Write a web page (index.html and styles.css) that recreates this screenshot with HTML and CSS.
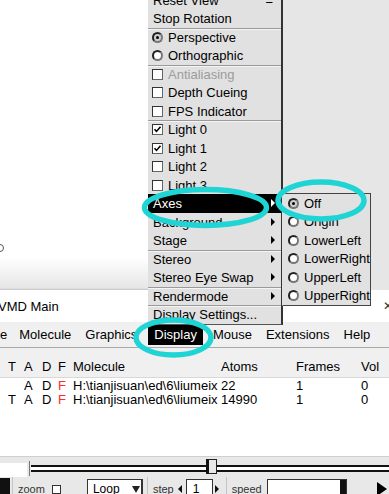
FILE: index.html
```html
<!DOCTYPE html>
<html lang="en">
<head>
  <meta charset="UTF-8">
  <title>VMD Main - Display menu</title>
  <link rel="stylesheet" href="styles.css">
</head>
<body>
  <div class="screen">
    <!-- behind the menu: GL window and desktop -->
    <div class="top">
      <div class="canvas"><span class="dot"></span></div>
      <div class="desk"></div>
    </div>

    <!-- VMD Main window -->
    <div class="vmd">
      <div class="titlebar">
        <span class="title">VMD Main</span>
        <span class="close">&#x2715;</span>
      </div>
      <div class="menubar">
        <span class="mb-item cut">e</span>
        <span class="mb-item">Molecule</span>
        <span class="mb-item">Graphics</span>
        <span class="mb-item open">Display</span>
        <span class="mb-item">Mouse</span>
        <span class="mb-item">Extensions</span>
        <span class="mb-item">Help</span>
      </div>
      <div class="list">
        <div class="row head">
          <span>T</span><span>A</span><span>D</span><span>F</span>
          <span>Molecule</span><span>Atoms</span><span>Frames</span><span>Vol</span>
        </div>
        <div class="row">
          <span></span><span>A</span><span>D</span><span class="red">F</span>
          <span>H:\tianjisuan\ed\6\liumeix</span><span>22</span><span>1</span><span>0</span>
        </div>
        <div class="row">
          <span>T</span><span>A</span><span>D</span><span class="red">F</span>
          <span>H:\tianjisuan\ed\6\liumeix</span><span>14990</span><span>1</span><span>0</span>
        </div>
      </div>
      <div class="slider">
        <span class="frame-box"></span>
        <div class="track"><span class="thumb"></span></div>
      </div>
      <div class="controls">
        <span class="stop"></span>
        <span class="label zoom">zoom</span>
        <span class="tick"></span>
        <span class="select">Loop<span class="drop"></span></span>
        <span class="label step">step</span>
        <span class="spin-l"></span>
        <span class="field">1</span>
        <span class="spin-r"></span>
        <span class="label speed-label">speed</span>
        <span class="speed"><span class="speed-thumb"></span></span>
        <span class="play"></span>
      </div>
    </div>

    <!-- Display menu -->
    <div class="menu">
      <div class="item">Reset View<span class="key">=</span></div>
      <div class="item">Stop Rotation</div>
      <div class="item sep"><span class="radio on"></span>Perspective</div>
      <div class="item"><span class="radio"></span>Orthographic</div>
      <div class="item sep off"><span class="box"></span>Antialiasing</div>
      <div class="item"><span class="box"></span>Depth Cueing</div>
      <div class="item"><span class="box"></span>FPS Indicator</div>
      <div class="item sep"><span class="box"><svg viewBox="0 0 9 9"><path d="M1.5 4.2l2 2.2 4-4.6" /></svg></span>Light 0</div>
      <div class="item"><span class="box"><svg viewBox="0 0 9 9"><path d="M1.5 4.2l2 2.2 4-4.6" /></svg></span>Light 1</div>
      <div class="item"><span class="box"></span>Light 2</div>
      <div class="item"><span class="box"></span>Light 3</div>
      <div class="item active">Axes<span class="arrow"></span></div>
      <div class="item">Background<span class="arrow"></span></div>
      <div class="item">Stage<span class="arrow"></span></div>
      <div class="item sep">Stereo<span class="arrow"></span></div>
      <div class="item">Stereo Eye Swap<span class="arrow"></span></div>
      <div class="item sep">Rendermode<span class="arrow"></span></div>
      <div class="item sep">Display Settings...</div>
    </div>

    <!-- Axes submenu -->
    <div class="submenu">
      <div class="item"><span class="radio on"></span>Off</div>
      <div class="item"><span class="radio"></span>Origin</div>
      <div class="item"><span class="radio"></span>LowerLeft</div>
      <div class="item"><span class="radio"></span>LowerRight</div>
      <div class="item"><span class="radio"></span>UpperLeft</div>
      <div class="item"><span class="radio"></span>UpperRight</div>
    </div>

    <!-- hand-drawn marks -->
    <svg class="marks" viewBox="0 0 389 494">
      <ellipse cx="205.5" cy="207.5" rx="61" ry="18" />
      <ellipse cx="321" cy="200.5" rx="43" ry="18.5" />
      <ellipse cx="173.5" cy="337.5" rx="37.5" ry="17.5" />
    </svg>
  </div>
</body>
</html>
```

FILE: styles.css
```css
body {
  margin: 0;
  font-family: "Liberation Sans", Arial, sans-serif;
  font-size: 13px;
  color: #000;
  background: #fff;
}

.screen {
  position: relative;
  width: 389px;
  height: 494px;
  overflow: hidden;
}

/* background behind the menu */
.top {
  display: grid;
  grid-template-columns: 148px 1fr;
  height: 290px;
}

.canvas {
  position: relative;
  background: linear-gradient(#fff 0, #fff 257px, #e6e6e6 288px, #c4c4c4 290px);
}

.dot {
  position: absolute;
  left: -4px;
  top: 244px;
  width: 6px;
  height: 6px;
  border: 1.5px solid #555;
  border-radius: 50%;
}

.desk {
  background: #e6e6e6;
}

/* VMD main window */
.titlebar {
  display: flex;
  align-items: center;
  justify-content: space-between;
  height: 32px;
  background: #fff;
}

.title {
  margin-left: -2px;
}

.close {
  margin-right: -4px;
  font-size: 12px;
  color: #333;
}

.menubar {
  display: flex;
  align-items: center;
  height: 25px;
  background: #f0f0f0;
  border-bottom: 1px solid #a8a8a8;
}

.mb-item {
  padding: 0 7px;
  line-height: 21px;
}

.mb-item.cut {
  margin-left: -7px;
  margin-right: -2px;
}

.mb-item.open {
  margin-left: 4px;
  margin-right: 3px;
  padding: 0 6px;
  background: #000;
  color: #fff;
}

.list {
  height: 108px;
  background: #fff;
}

.row {
  display: grid;
  grid-template-columns: 16px 18px 16px 15px 148px 75px 65px 1fr;
  padding-left: 8px;
  height: 14px;
  line-height: 14px;
  white-space: nowrap;
  overflow: hidden;
}

.row.head {
  height: auto;
  padding-top: 12px;
  padding-bottom: 3px;
  margin-bottom: 1px;
  background: #f0f0f0;
  border-bottom: 1px solid #d8d8d8;
}

.red {
  color: #ff2a2a;
}

/* animation slider */
.slider {
  display: flex;
  align-items: flex-end;
  gap: 3px;
  height: 20px;
  background: #e8e8e8;
  border-top: 1px solid #cfcfcf;
}

.frame-box {
  width: 27px;
  height: 14px;
  background: #fff;
}

.track {
  position: relative;
  flex: 1;
  height: 3px;
  margin: 0 0 5px 1px;
  border-top: 2px solid #111;
  border-bottom: 2px solid #111;
  background: #fff;
}

.track::before {
  content: "";
  position: absolute;
  left: -2px;
  top: -6px;
  height: 15px;
  border-left: 1px solid #777;
}

.thumb {
  position: absolute;
  left: 175px;
  top: -8px;
  width: 7px;
  height: 13px;
  background: #e8e8e8;
  border: 1px solid #222;
  border-left: 3px solid #111;
}

.controls {
  display: flex;
  align-items: center;
  height: 24px;
  background: #e8e8e8;
  color: #333;
  font-size: 11px;
}

.stop {
  align-self: stretch;
  width: 10px;
  margin: 1px 2px 0 0;
  background: #111;
}

.controls .label {
  align-self: stretch;
  display: flex;
  align-items: center;
  border-left: 1px solid #c4c4c4;
}

.label.zoom {
  padding: 0 7px 0 5px;
}

.tick {
  box-sizing: border-box;
  width: 9px;
  height: 9px;
  background: #fff;
  border: 1px solid #333;
  margin-right: 26px;
}

.select {
  position: relative;
  box-sizing: border-box;
  width: 56px;
  height: 20px;
  padding-left: 5px;
  background: #fff;
  border: 1px solid #333;
  border-right-width: 2px;
  line-height: 18px;
  font-size: 12px;
  color: #000;
  margin-right: 4px;
}

.drop {
  position: absolute;
  right: 1px;
  top: 6px;
  border-top: 7px solid #222;
  border-left: 4px solid transparent;
  border-right: 4px solid transparent;
}

.label.step {
  padding: 0 4px 0 5px;
}

.spin-l,
.spin-r {
  width: 0;
  height: 0;
  border-top: 4px solid transparent;
  border-bottom: 4px solid transparent;
}

.spin-l {
  border-right: 4px solid #111;
  margin-right: 4px;
}

.spin-r {
  border-left: 4px solid #111;
  margin-left: 2px;
  margin-right: 7px;
}

.field {
  box-sizing: border-box;
  width: 27px;
  height: 20px;
  padding-left: 6px;
  background: #fff;
  border: 1px solid #333;
  line-height: 18px;
  font-size: 12px;
  color: #000;
}

.label.speed-label {
  padding: 0 5px 0 5px;
}

.speed {
  position: relative;
  box-sizing: border-box;
  width: 80px;
  height: 20px;
  background: #fff;
  border: 1px solid #333;
}

.speed-thumb {
  position: absolute;
  right: 0;
  top: 0;
  width: 6px;
  height: 18px;
  background: #111;
}

.play {
  margin-left: auto;
  margin-right: 2px;
  border-left: 10px solid #000;
  border-top: 7px solid transparent;
  border-bottom: 7px solid transparent;
}

/* popup menus */
.menu,
.submenu {
  position: absolute;
  background: #e1e1e1;
}

.menu {
  left: 148px;
  top: -9.25px;
  width: 133px;
  border-right: 2px solid #333;
  border-bottom: 1px solid #555;
}

.submenu {
  left: 282px;
  top: 193px;
  width: 87px;
  border: 1px solid #444;
  border-left-color: #e1e1e1;
}

.item {
  position: relative;
  display: flex;
  align-items: center;
  height: 18.5px;
  padding-left: 5px;
  white-space: nowrap;
}

.item.sep {
  box-shadow: inset 0 1px #9a9a9a, inset 0 2px #f4f4f4;
}

.item.off {
  color: #9c9c9c;
}

.item.active {
  background: #000;
  color: #fff;
}

.key {
  position: absolute;
  right: 8px;
}

.arrow {
  position: absolute;
  right: 6px;
  top: 5px;
  border-left: 4px solid #000;
  border-top: 4px solid transparent;
  border-bottom: 4px solid transparent;
}

.active .arrow {
  border-left-color: #fff;
}

.box,
.radio {
  display: inline-flex;
  box-sizing: border-box;
  width: 11px;
  height: 11px;
  margin-left: -1px;
  margin-right: 5px;
  background: #fff;
  border: 1px solid #666;
  border-top-color: #333;
  border-left-color: #333;
}

.box svg {
  width: 9px;
  height: 9px;
  fill: none;
  stroke: #000;
  stroke-width: 1.6;
}

.radio {
  border-radius: 50%;
  border-width: 2px;
  border-color: #222 #777 #777 #222;
  align-items: center;
  justify-content: center;
}

.radio.on {
  background: #cfcfcf;
}

.radio.on::after {
  content: "";
  width: 3px;
  height: 3px;
  border-radius: 50%;
  background: #000;
}

.submenu .radio {
  margin-left: 0;
}

.marks {
  position: absolute;
  left: 0;
  top: 0;
  width: 389px;
  height: 494px;
  pointer-events: none;
}

.marks ellipse {
  fill: none;
  stroke: #1ed4d4;
  stroke-width: 5.5;
}
```
